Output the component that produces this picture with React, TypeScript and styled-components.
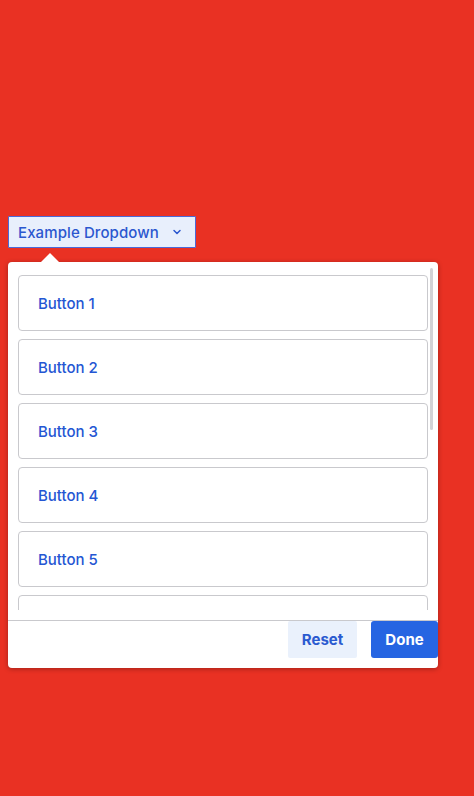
import React from "react";
import styled, { createGlobalStyle } from "styled-components";

const Global = createGlobalStyle`
  html, body { margin: 0; padding: 0; background: #e93123; }
  body { font-family: Inter, "Noto Sans", sans-serif; }
  * { box-sizing: border-box; }
`;

const Page = styled.div`
  width: 474px;
  height: 796px;
  background: #e93123;
  padding: 216px 0 0 8px;
`;

const Anchor = styled.div`
  position: relative;
  width: 430px;
`;

const Trigger = styled.button`
  display: flex;
  align-items: center;
  gap: 12px;
  width: 188px;
  height: 32px;
  padding: 0 0 0 9px;
  background: #e8effc;
  border: 1.5px solid #4b69d8;
  border-radius: 1px;
  color: #2b57cf;
  font-family: inherit;
  font-size: 15px;
  font-weight: 500;
  letter-spacing: 0.1px;
  cursor: pointer;
`;

const Menu = styled.div`
  position: absolute;
  top: 46px;
  left: 0;
  width: 430px;
  background: #fff;
  border-radius: 4px;
  box-shadow: 0 1px 5px rgba(0, 0, 0, 0.3);
  &::before {
    content: "";
    position: absolute;
    top: -9px;
    left: 33px;
    border-left: 9px solid transparent;
    border-right: 9px solid transparent;
    border-bottom: 9px solid #fff;
  }
`;

const Scroll = styled.div`
  height: 348px;
  overflow-y: auto;
  scrollbar-width: none;
  padding: 13px 0 10px 10px;
  display: flex;
  flex-direction: column;
  gap: 8px;
  &::-webkit-scrollbar { display: none; }
`;

const ScrollThumb = styled.div`
  position: absolute;
  top: 6px;
  right: 5px;
  width: 3px;
  height: 162px;
  border-radius: 2px;
  background: #d2d2d6;
`;

const Item = styled.button`
  flex: 0 0 56px;
  width: 410px;
  height: 56px;
  text-align: left;
  padding: 0 0 0 19px;
  background: #fff;
  border: 1px solid #c9c9cd;
  border-radius: 4px;
  color: #2456d3;
  font-family: inherit;
  font-size: 15px;
  font-weight: 500;
  cursor: pointer;
`;

const Footer = styled.div`
  margin-top: 10px;
  border-top: 1px solid #c9c9cd;
  display: flex;
  justify-content: flex-end;
  gap: 14px;
  padding-bottom: 10px;
`;

const FooterButton = styled.button<{ $primary?: boolean }>`
  height: 37px;
  width: ${(p) => (p.$primary ? "67px" : "69px")};
  border: none;
  border-radius: ${(p) => (p.$primary ? "3px" : "2px")};
  background: ${(p) => (p.$primary ? "#2665e2" : "#eaf1fc")};
  color: ${(p) => (p.$primary ? "#fff" : "#2a5ad0")};
  font-family: inherit;
  font-size: 15px;
  font-weight: 700;
  cursor: pointer;
`;

const Chevron = () => (
  <svg width="12" height="12" viewBox="0 0 24 24" fill="none" stroke="#2b57cf" strokeWidth="3" strokeLinecap="round" strokeLinejoin="round">
    <path d="M6 9l6 6 6-6" />
  </svg>
);

export default function App() {
  const items = Array.from({ length: 11 }, (_, i) => `Button ${i + 1}`);
  return (
    <Page>
      <Global />
      <Anchor>
        <Trigger>
          Example Dropdown
          <Chevron />
        </Trigger>
        <Menu>
          <ScrollThumb />
          <Scroll>
            {items.map((t) => (
              <Item key={t}>{t}</Item>
            ))}
          </Scroll>
          <Footer>
            <FooterButton>Reset</FooterButton>
            <FooterButton $primary>Done</FooterButton>
          </Footer>
        </Menu>
      </Anchor>
    </Page>
  );
}
